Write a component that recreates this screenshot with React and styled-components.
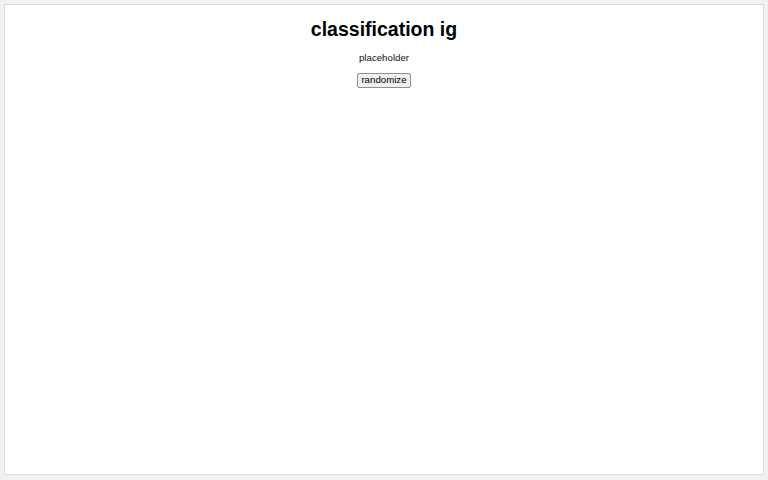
import React from "react";
import styled, { createGlobalStyle } from "styled-components";

const Global = createGlobalStyle`
  html, body { margin: 0; padding: 0; }
  body {
    background: #f2f2f2;
    font-family: "Liberation Sans", Arial, sans-serif;
  }
`;

const Page = styled.div`
  padding: 4px 4px 5px 4px;
  box-sizing: border-box;
  height: 480px;
`;

const Panel = styled.main`
  height: 100%;
  box-sizing: border-box;
  background: #fff;
  border: 1px solid #dcdcdc;
  display: flex;
  flex-direction: column;
  align-items: center;
`;

const Title = styled.h1`
  margin: 13px 0 0;
  font-size: 19.5px;
  font-weight: bold;
  color: #000;
  line-height: 22px;
`;

const Caption = styled.p`
  margin: 12px 0 0;
  font-size: 9.7px;
  line-height: 12px;
  color: #111;
`;

const Button = styled.button`
  margin-top: 9px;
  font-family: "Liberation Sans", Arial, sans-serif;
  font-size: 9.7px;
  line-height: 12px;
  padding: 0 3.5px;
  height: 14.5px;
  background: #efefef;
  border: 1px solid #8f8f8f;
  border-radius: 2px;
  color: #000;
`;

export default function App() {
  return (
    <>
      <Global />
      <Page>
        <Panel>
          <Title>classification ig</Title>
          <Caption>placeholder</Caption>
          <Button>randomize</Button>
        </Panel>
      </Page>
    </>
  );
}
